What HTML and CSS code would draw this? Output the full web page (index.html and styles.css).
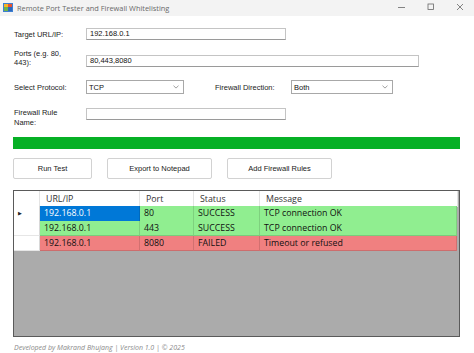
FILE: index.html
```html
<!DOCTYPE html>
<html lang="en">
<head>
    <meta charset="UTF-8">
    <meta name="viewport" content="width=device-width, initial-scale=1.0">
    <title>Remote Port Tester and Firewall Whitelisting</title>
    <link rel="stylesheet" href="styles.css">
</head>
<body>
    <div class="titlebar">
        <svg class="app-icon" width="10" height="9" viewBox="0 0 10 9">
            <rect x="0" y="0" width="10" height="9" fill="#3d7fd1"/>
            <rect x="1" y="1" width="4" height="3" fill="#f5b324"/>
            <rect x="5" y="1" width="4" height="3" fill="#e8532f"/>
            <rect x="1" y="4" width="4" height="4" fill="#6fb34a"/>
            <rect x="5" y="4" width="4" height="4" fill="#2c67bd"/>
        </svg>
        <span class="title">Remote Port Tester and Firewall Whitelisting</span>
        <div class="win-controls">
            <span class="win-btn">
                <svg width="8" height="8" viewBox="0 0 8 8"><path d="M0 4.5h7" stroke="#666" stroke-width="0.8"/></svg>
            </span>
            <span class="win-btn">
                <svg width="8" height="8" viewBox="0 0 8 8"><rect x="1" y="1" width="5.5" height="5.5" fill="none" stroke="#666" stroke-width="0.8"/></svg>
            </span>
            <span class="win-btn">
                <svg width="8" height="8" viewBox="0 0 8 8"><path d="M1 1l6 6M7 1l-6 6" stroke="#666" stroke-width="0.8"/></svg>
            </span>
        </div>
    </div>

    <div class="form">
        <div class="row row-target">
            <label class="lbl">Target URL/IP:</label>
            <div class="textbox short">192.168.0.1</div>
        </div>

        <div class="row row-ports">
            <label class="lbl two-line">Ports (e.g. 80,<br>443):</label>
            <div class="textbox long">80,443,8080</div>
        </div>

        <div class="row row-protocol">
            <label class="lbl">Select Protocol:</label>
            <div class="combo combo-protocol">
                <span>TCP</span>
                <svg width="6" height="4" viewBox="0 0 6 4"><path d="M0.5 0.7l2.5 2.4 2.5-2.4" fill="none" stroke="#888" stroke-width="0.8"/></svg>
            </div>
            <label class="lbl lbl-direction">Firewall Direction:</label>
            <div class="combo combo-direction">
                <span>Both</span>
                <svg width="6" height="4" viewBox="0 0 6 4"><path d="M0.5 0.7l2.5 2.4 2.5-2.4" fill="none" stroke="#888" stroke-width="0.8"/></svg>
            </div>
        </div>

        <div class="row row-rule">
            <label class="lbl two-line">Firewall Rule<br>Name:</label>
            <div class="textbox short"></div>
        </div>

        <div class="progress"><div class="progress-fill" style="width: 100%"></div></div>

        <div class="buttons">
            <button class="btn btn-run">Run Test</button>
            <button class="btn">Export to Notepad</button>
            <button class="btn">Add Firewall Rules</button>
        </div>

        <div class="grid">
            <div class="grid-row grid-head">
                <div class="cell row-header"></div>
                <div class="cell">URL/IP</div>
                <div class="cell">Port</div>
                <div class="cell">Status</div>
                <div class="cell">Message</div>
            </div>
            <div class="grid-row ok">
                <div class="cell row-header"><span class="arrow">&#9654;</span></div>
                <div class="cell selected">192.168.0.1</div>
                <div class="cell">80</div>
                <div class="cell">SUCCESS</div>
                <div class="cell">TCP connection OK</div>
            </div>
            <div class="grid-row ok">
                <div class="cell row-header"></div>
                <div class="cell">192.168.0.1</div>
                <div class="cell">443</div>
                <div class="cell">SUCCESS</div>
                <div class="cell">TCP connection OK</div>
            </div>
            <div class="grid-row failed">
                <div class="cell row-header"></div>
                <div class="cell">192.168.0.1</div>
                <div class="cell">8080</div>
                <div class="cell">FAILED</div>
                <div class="cell">Timeout or refused</div>
            </div>
        </div>

        <div class="footer">Developed by Makrand Bhujang | Version 1.0 | &copy; 2025</div>
    </div>
</body>
</html>
```

FILE: styles.css
```css
body {
    margin: 0;
    padding: 0;
    width: 474px;
    height: 353px;
    overflow: hidden;
    background: #ffffff;
    font-family: 'Liberation Sans', Arial, sans-serif;
    font-size: 7.5px;
    color: #1a1a1a;
}

.titlebar {
    height: 16px;
    display: flex;
    align-items: center;
    background: #f3f3f3;
}

.app-icon {
    margin-left: 3px;
    margin-top: -1px;
}

.title {
    margin-left: 4px;
    margin-top: -1px;
    font-family: 'Open Sans', sans-serif;
    font-size: 7.4px;
    color: #6a6a6a;
}

.win-controls {
    margin-left: auto;
    display: flex;
}

.win-btn {
    width: 29px;
    height: 16px;
    display: flex;
    align-items: center;
    justify-content: center;
    margin-top: -2px;
}

.form {
    padding: 0 14px 0 13px;
}

.row {
    display: flex;
    align-items: center;
}

.lbl {
    width: 72px;
    margin-left: 1px;
    flex-shrink: 0;
    color: #222;
}

.two-line {
    line-height: 9.2px;
}

.row-target {
    margin-top: 12px;
    height: 12px;
}

.row-ports {
    margin-top: 9px;
    align-items: flex-end;
}

.row-protocol {
    margin-top: 13px;
    height: 14px;
}

.row-rule {
    margin-top: 14px;
    align-items: flex-start;
}

.textbox {
    box-sizing: border-box;
    height: 12px;
    border: 1px solid #c4c4c4;
    border-bottom-color: #9a9a9a;
    background: #fff;
    padding: 0 3px;
    line-height: 10px;
    color: #111;
}

.short {
    width: 200px;
}

.long {
    width: 333px;
}

.combo {
    box-sizing: border-box;
    height: 14px;
    border: 1px solid #a8a8a8;
    background: #fff;
    display: flex;
    align-items: center;
    justify-content: space-between;
    padding: 0 4px 0 2px;
    color: #111;
}

.combo-protocol {
    width: 98px;
}

.combo-direction {
    width: 102px;
}

.lbl-direction {
    margin-left: 31px;
    width: 76px;
}

.progress {
    margin-top: 10px;
    width: 447px;
    height: 12px;
    background: #e6e6e6;
}

.progress-fill {
    height: 100%;
    background: #06b025;
}

.buttons {
    margin-top: 9px;
    display: flex;
    gap: 15px;
}

.btn {
    box-sizing: border-box;
    width: 105px;
    height: 21px;
    background: #ffffff;
    border: 1px solid #d2d2d2;
    border-radius: 2px;
    font-family: 'Liberation Sans', Arial, sans-serif;
    font-size: 7.5px;
    color: #1a1a1a;
    padding: 0;
}

.btn-run {
    width: 79px;
}

.grid {
    box-sizing: border-box;
    margin-top: 11px;
    width: 447px;
    height: 147px;
    border: 1px solid #5a5a5a;
    background: #ababab;
    font-family: 'Open Sans', sans-serif;
    font-size: 8.8px;
}

.grid-row {
    display: grid;
    grid-template-columns: 26px 100px 54px 66px 197px;
    height: 15px;
}

.cell {
    box-sizing: border-box;
    line-height: 14px;
    padding-left: 4px;
    border-right: 1px solid rgba(0, 0, 0, 0.12);
    border-bottom: 1px solid rgba(0, 0, 0, 0.14);
    white-space: nowrap;
    color: #111;
}

.grid-head .cell {
    background: #ffffff;
    padding-left: 6px;
    line-height: 16px;
    color: #333;
    border-right-color: #e4e4e4;
    border-bottom: none;
}

.grid-head {
    grid-template-columns: 26px 100px 54px 66px 198px;
}

.row-header {
    background: #ffffff;
    border-right-color: #d8d8d8;
    border-bottom-color: #e6e6e6;
}

.arrow {
    font-size: 5px;
    color: #222;
    position: relative;
    top: -1px;
}

.ok .cell {
    background: #90ee90;
}

.failed .cell {
    background: #f08080;
}

.ok .row-header,
.failed .row-header {
    background: #ffffff;
}

.ok .cell.selected {
    background: #0078d7;
    color: #ffffff;
}

.footer {
    margin-top: 6px;
    margin-left: 1px;
    font-family: 'Open Sans', sans-serif;
    font-style: italic;
    font-size: 7px;
    color: #8a8a8a;
}
```
